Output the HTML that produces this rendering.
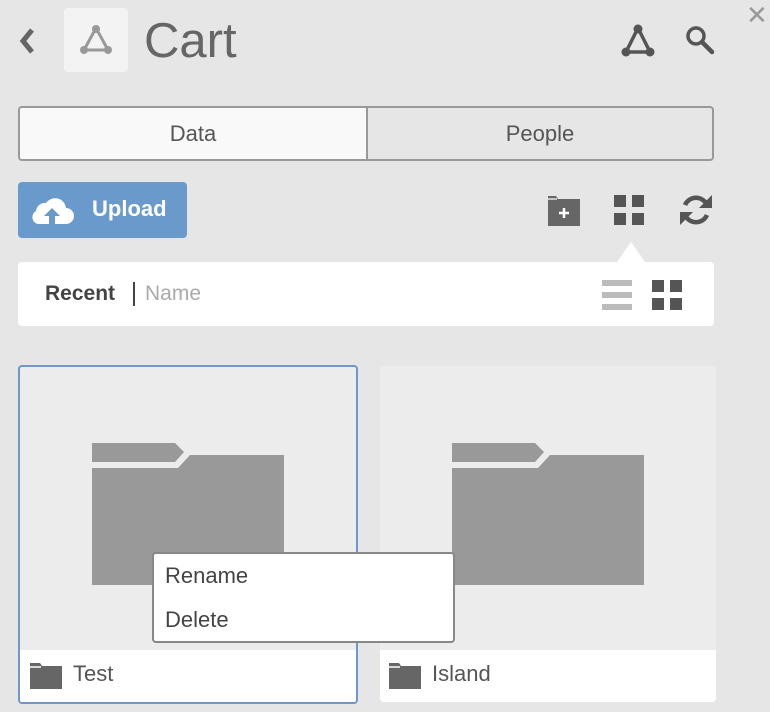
<!DOCTYPE html>
<html><head><style>
body{margin:0;width:770px;height:712px;background:#e6e6e6;font-family:"Liberation Sans",sans-serif;position:relative;overflow:hidden;color:#555}
.a{position:absolute}
</style></head><body>
<svg class="a" style="left:14px;top:26px" width="26" height="30" viewBox="0 0 26 30"><path d="M18 4 L9 15 L18 26" stroke="#666" stroke-width="5" fill="none"/></svg>
<div class="a" style="left:64px;top:8px;width:64px;height:64px;background:#f3f3f3;border-radius:4px"></div>
<svg class="a" style="left:76px;top:22px" width="40" height="36" viewBox="0 0 40 36"><path d="M20 6 L8 28 L32 28 Z" stroke="#999" stroke-width="3" fill="none"/><circle cx="20" cy="7" r="4" fill="#999"/><circle cx="8" cy="28" r="4" fill="#999"/><circle cx="32" cy="28" r="4" fill="#999"/></svg>
<div class="a" style="left:144px;top:13px;font-size:49px;color:#666">Cart</div>
<svg class="a" style="left:618px;top:22px" width="40" height="36" viewBox="0 0 40 36"><path d="M20 6 L8 30 L32 30 Z" stroke="#555" stroke-width="3.5" fill="none"/><circle cx="20" cy="7" r="4.5" fill="#555"/><circle cx="8" cy="30" r="4.5" fill="#555"/><circle cx="32" cy="30" r="4.5" fill="#555"/></svg>
<svg class="a" style="left:684px;top:24px" width="34" height="32" viewBox="0 0 34 32"><circle cx="12" cy="12" r="8" stroke="#555" stroke-width="3.5" fill="none"/><path d="M18 18 L28 28" stroke="#555" stroke-width="4.5" stroke-linecap="round"/></svg>
<div class="a" style="left:746px;top:0;font-size:26px;color:#999">✕</div>
<div class="a" style="left:18px;top:106px;width:692px;height:51px;border:2px solid #999;border-radius:4px;display:flex;overflow:hidden">
<div style="width:346px;background:#f9f9f9;border-right:2px solid #999;text-align:center;line-height:51px;font-size:22px">Data</div>
<div style="flex:1;text-align:center;line-height:51px;font-size:22px">People</div></div>
<div class="a" style="left:18px;top:182px;width:169px;height:56px;background:#6a99cc;border-radius:4px"></div>
<svg class="a" style="left:30px;top:194px" width="44" height="32" viewBox="0 0 44 32"><path d="M8 30 A7 7 0 0 1 6 17 A9 9 0 0 1 16 9 A11 11 0 0 1 36 14 A8 8 0 0 1 36 30 Z" fill="#fff"/><path d="M22 14 L14 22 L19 22 L19 30 L25 30 L25 22 L30 22 Z" fill="#6a99cc"/></svg>
<div class="a" style="left:92px;top:196px;font-size:22px;font-weight:bold;color:#fff">Upload</div>
<svg class="a" style="left:547px;top:194px" width="34" height="34" viewBox="0 0 34 34"><path d="M1 2 H9 L11 5 H33 V32 H1 Z" fill="#666"/><path d="M1 5 H10" stroke="#e6e6e6" stroke-width="1.5"/><path d="M17 14 V24 M12 19 H22" stroke="#fff" stroke-width="2.5"/></svg>
<svg class="a" style="left:614px;top:195px" width="31" height="31"><rect x="0" y="0" width="12" height="12" fill="#555"/><rect x="18" y="0" width="12" height="12" fill="#555"/><rect x="0" y="18" width="12" height="12" fill="#555"/><rect x="18" y="18" width="12" height="12" fill="#555"/></svg>
<svg class="a" style="left:678px;top:193px" width="36" height="34" viewBox="0 0 36 34"><path d="M29 12 A12 12 0 0 0 7 12" stroke="#555" stroke-width="4.5" fill="none"/><path d="M7 22 A12 12 0 0 0 29 22" stroke="#555" stroke-width="4.5" fill="none"/><path d="M34 2 V15 H21 Z" fill="#555"/><path d="M2 32 V19 H15 Z" fill="#555"/></svg>
<div class="a" style="left:617px;top:242px;width:0;height:0;border-left:14px solid transparent;border-right:14px solid transparent;border-bottom:20px solid #fff"></div>
<div class="a" style="left:18px;top:262px;width:696px;height:64px;background:#fff;border-radius:4px"></div>
<div class="a" style="left:45px;top:282px;font-size:21px;font-weight:bold;color:#444">Recent</div>
<div class="a" style="left:133px;top:282px;width:2px;height:24px;background:#444"></div>
<div class="a" style="left:145px;top:282px;font-size:21px;color:#aaa">Name</div>
<svg class="a" style="left:602px;top:280px" width="31" height="31"><rect y="0" width="30" height="6" fill="#bbb"/><rect y="12" width="30" height="6" fill="#bbb"/><rect y="24" width="30" height="6" fill="#bbb"/></svg>
<svg class="a" style="left:652px;top:280px" width="31" height="31"><rect x="0" y="0" width="12" height="12" fill="#555"/><rect x="18" y="0" width="12" height="12" fill="#555"/><rect x="0" y="18" width="12" height="12" fill="#555"/><rect x="18" y="18" width="12" height="12" fill="#555"/></svg>

<div class="a" style="left:18px;top:365px;width:336px;height:335px;border:2px solid #6f97cc;border-radius:4px;background:#ececec;overflow:hidden">
<div class="a" style="left:0;top:283px;width:336px;height:52px;background:#fff"></div></div>
<div class="a" style="left:380px;top:366px;width:336px;height:336px;border-radius:4px;background:#ececec;overflow:hidden">
<div class="a" style="left:0;top:284px;width:336px;height:52px;background:#fff"></div></div>

<svg class="a" style="left:92px;top:443px" width="193" height="143"><path d="M0 0 H83 L92 9 L83 19 H0 Z" fill="#999"/><path d="M0 25 H86 L98 12 H192 V142 H0 Z" fill="#999"/></svg>
<svg class="a" style="left:452px;top:443px" width="193" height="143"><path d="M0 0 H83 L92 9 L83 19 H0 Z" fill="#999"/><path d="M0 25 H86 L98 12 H192 V142 H0 Z" fill="#999"/></svg>

<svg class="a" style="left:30px;top:663px" width="33" height="27"><path d="M0 0 H10 L12 3 H32 V26 H0 Z" fill="#666"/><path d="M0 4 H11" stroke="#fff" stroke-width="1.5"/></svg>
<div class="a" style="left:73px;top:661px;font-size:22px;color:#555">Test</div>
<svg class="a" style="left:389px;top:663px" width="33" height="27"><path d="M0 0 H10 L12 3 H32 V26 H0 Z" fill="#666"/><path d="M0 4 H11" stroke="#fff" stroke-width="1.5"/></svg>
<div class="a" style="left:432px;top:661px;font-size:22px;color:#555">Island</div>

<div class="a" style="left:152px;top:552px;width:299px;height:87px;border:2px solid #888;border-radius:4px;background:#fff"></div>
<div class="a" style="left:165px;top:563px;font-size:22px;color:#444">Rename</div>
<div class="a" style="left:165px;top:607px;font-size:22px;color:#444">Delete</div>
</body></html>
